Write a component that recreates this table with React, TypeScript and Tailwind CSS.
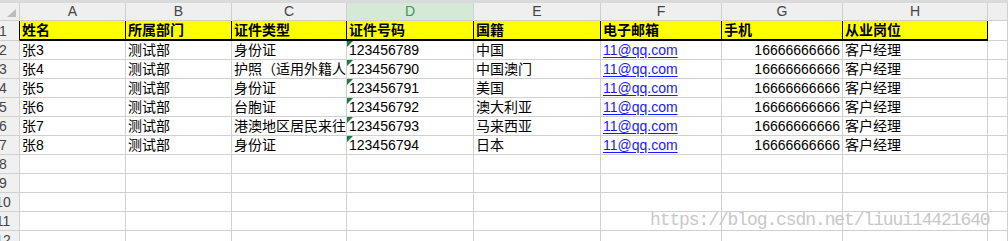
import React from 'react';

// column layout of the sheet (width includes the 1px right gridline)
const COLS = [
  { letter: 'A', w: 'w-[106px]' },
  { letter: 'B', w: 'w-[106px]' },
  { letter: 'C', w: 'w-[115px]' },
  { letter: 'D', w: 'w-[127px]' },
  { letter: 'E', w: 'w-[127px]' },
  { letter: 'F', w: 'w-[121px]' },
  { letter: 'G', w: 'w-[121px]' },
  { letter: 'H', w: 'w-[145px]' },
];

const HEAD = ['姓名', '所属部门', '证件类型', '证件号码', '国籍', '电子邮箱', '手机', '从业岗位'];

const ROWS = [
  ['张3', '测试部', '身份证', '123456789', '中国'],
  ['张4', '测试部', '护照（适用外籍人士）', '123456790', '中国澳门'],
  ['张5', '测试部', '身份证', '123456791', '美国'],
  ['张6', '测试部', '台胞证', '123456792', '澳大利亚'],
  ['张7', '测试部', '港澳地区居民来往内地通行证', '123456793', '马来西亚'],
  ['张8', '测试部', '身份证', '123456794', '日本'],
];

const grid = 'border-r border-b border-[#d0d0d0]';

function RowNum({ n, tall }: { n: number; tall?: boolean }) {
  return (
    <div
      className={`w-[20px] shrink-0 overflow-hidden bg-[#f0f0f0] ${grid} ${tall ? 'border-r-black' : ''} flex items-end`}
    >
      <div className="w-[30px] ml-[-12px] shrink-0 text-center text-[14px] leading-[17px] text-[#444]">{n}</div>
    </div>
  );
}

function Cell({ w, children, right, className = '' }: { w: string; children?: React.ReactNode; right?: boolean; className?: string }) {
  return (
    <div
      className={`${w} shrink-0 ${grid} flex items-end overflow-hidden whitespace-nowrap px-[2px] ${right ? 'justify-end' : ''} ${className}`}
    >
      <span className="leading-[17px]">{children}</span>
    </div>
  );
}

export default function App() {
  return (
    <div className="relative w-[1008px] h-[241px] overflow-hidden bg-white text-[14px] text-black font-['Liberation_Sans','Noto_Sans_CJK_SC',sans-serif]">
      {/* top strip */}
      <div className="h-[3px] bg-[#dadada]" />

      {/* column letters */}
      <div className="flex h-[18px] bg-[#efefef] text-[#444]">
        <div className={`w-[20px] shrink-0 ${grid}`}>
          <svg width="20" height="17" viewBox="0 0 20 17">
            <polygon points="7,14 16,14 16,6" fill="#bcbcbc" />
          </svg>
        </div>
        {COLS.map((c) => (
          <div
            key={c.letter}
            className={`${c.w} shrink-0 ${grid} flex items-center justify-center leading-[17px] ${
              c.letter === 'D' ? 'bg-[#d6e8d6] text-[#3a9a55]' : ''
            }`}
          >
            {c.letter}
          </div>
        ))}
        <div className={`flex-1 ${grid}`} />
      </div>

      {/* row 1: yellow header */}
      <div className="flex h-[20px]">
        <RowNum n={1} tall />
        {COLS.map((c, i) => (
          <div
            key={c.letter}
            className={`${c.w} shrink-0 bg-[#ffff00] border-r border-r-black border-b-2 border-b-black flex items-end px-[2px] font-semibold`}
          >
            <span className="leading-[17px]">{HEAD[i]}</span>
          </div>
        ))}
        <div className={`flex-1 ${grid}`} />
      </div>

      {/* data rows */}
      {ROWS.map((r, i) => (
        <div key={i} className="flex h-[19px]">
          <RowNum n={i + 2} />
          <Cell w="w-[106px]">{r[0]}</Cell>
          <Cell w="w-[106px]">{r[1]}</Cell>
          <Cell w="w-[115px]">{r[2]}</Cell>
          <div className={`relative w-[127px] shrink-0 ${grid} flex items-end px-[2px]`}>
            <svg className="absolute left-0 top-0" width="6" height="6" viewBox="0 0 6 6">
              <polygon points="0,0 6,0 0,6" fill="#1f7a3f" />
            </svg>
            <span className="leading-[17px]">{r[3]}</span>
          </div>
          <Cell w="w-[127px]">{r[4]}</Cell>
          <Cell w="w-[121px]" className="text-[#1a1aff]">
            <span className="underline underline-offset-[2px]">11@qq.com</span>
          </Cell>
          <Cell w="w-[121px]" right>
            16666666666
          </Cell>
          <Cell w="w-[145px]">客户经理</Cell>
          <div className={`flex-1 ${grid}`} />
        </div>
      ))}

      {/* empty rows */}
      {[8, 9, 10, 11, 12].map((n) => (
        <div key={n} className="flex h-[19px]">
          <RowNum n={n} />
          {COLS.map((c) => (
            <Cell key={c.letter} w={c.w} />
          ))}
          <div className={`flex-1 ${grid}`} />
        </div>
      ))}

      {/* watermark */}
      <div className="absolute left-[650px] top-[209px] text-[18px] tracking-[-1.1px] leading-[22px] text-[#c8c8c8] font-['Liberation_Mono',monospace]">
        https://blog.csdn.net/liuui14421640
      </div>
    </div>
  );
}
